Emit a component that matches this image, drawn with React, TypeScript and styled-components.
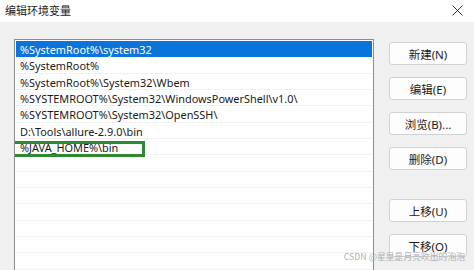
import styled, { createGlobalStyle } from 'styled-components';

const paths = [
  '%SystemRoot%\\system32',
  '%SystemRoot%',
  '%SystemRoot%\\System32\\Wbem',
  '%SYSTEMROOT%\\System32\\WindowsPowerShell\\v1.0\\',
  '%SYSTEMROOT%\\System32\\OpenSSH\\',
  'D:\\Tools\\allure-2.9.0\\bin',
  '%JAVA_HOME%\\bin',
  '',
  '',
  '',
  '',
  '',
  '',
  '',
];

const GlobalStyle = createGlobalStyle`
  html, body {
    margin: 0;
    padding: 0;
    width: 474px;
    height: 270px;
    overflow: hidden;
    background: #f0f0f0;
  }
  * {
    box-sizing: border-box;
  }
`;

export default function App() {
  return (
    <>
      <GlobalStyle />
      <StWindow>
        <StTitleBar>
          <StTitle>编辑环境变量</StTitle>
          <StClose aria-label="close">
            <svg width="11" height="11" viewBox="0 0 11 11">
              <path d="M0.5 0.5 L10.5 10.5 M10.5 0.5 L0.5 10.5" stroke="#333" strokeWidth="1" />
            </svg>
          </StClose>
        </StTitleBar>
        <StBody>
          <StList>
            {paths.map((p, i) => (
              <StRow key={i} selected={i === 0}>
                {p}
              </StRow>
            ))}
            <StMark />
          </StList>
          <StButtons>
            <StButton>新建(N)</StButton>
            <StButton>编辑(E)</StButton>
            <StButton>浏览(B)...</StButton>
            <StButton>删除(D)</StButton>
            <StButton $gap>上移(U)</StButton>
            <StButton>下移(O)</StButton>
          </StButtons>
          <StWatermark>CSDN @星星是月亮吹出的泡泡</StWatermark>
        </StBody>
      </StWindow>
    </>
  );
}

const StWindow = styled.div`
  display: flex;
  flex-direction: column;
  width: 474px;
  height: 270px;
  overflow: hidden;
  font-family: 'Noto Sans', 'Noto Sans CJK SC', sans-serif;
`;

const StTitleBar = styled.header`
  display: flex;
  align-items: center;
  justify-content: space-between;
  flex: 0 0 22px;
  padding: 0 5px 0 5px;
  background: #ffffff;
`;

const StTitle = styled.span`
  font-family: 'Noto Sans CJK SC', sans-serif;
  font-size: 11px;
  color: #222;
  margin-top: -2px;
`;

const StClose = styled.button`
  display: flex;
  align-items: center;
  justify-content: center;
  width: 24px;
  height: 22px;
  padding: 0;
  border: none;
  background: transparent;
  margin-top: -1px;
`;

const StBody = styled.main`
  position: relative;
  flex: 1;
  min-height: 0;
  overflow: hidden;
  display: flex;
  align-items: flex-start;
  padding: 17px 0 0 14px;
  background: #f0f0f0;
`;

const StList = styled.ul`
  position: relative;
  flex: 0 0 360px;
  height: 240px;
  margin: 0;
  padding: 1px 1px;
  list-style: none;
  background: #ffffff;
  border: 1px solid #8c8c8c;
  overflow: hidden;
`;

const StRow = styled.li<{ selected?: boolean }>`
  height: 16.35px;
  padding-left: 4px;
  font-size: 10.9px;
  line-height: 17px;
  white-space: nowrap;
  color: ${({ selected }) => (selected ? '#ffffff' : '#1a1a1a')};
  background: ${({ selected }) => (selected ? '#0a74da' : '#ffffff')};
  border-bottom: 1px solid ${({ selected }) => (selected ? '#0a74da' : '#f1f1f1')};
`;

const StMark = styled.div`
  position: absolute;
  left: -5px;
  top: 101px;
  width: 135px;
  height: 16px;
  border: 3px solid #2d8a30;
`;

const StButtons = styled.div`
  display: flex;
  flex-direction: column;
  gap: 12px;
  margin: 3px 0 0 15px;
`;

const StButton = styled.button<{ $gap?: boolean }>`
  width: 78px;
  height: 23px;
  margin-top: ${({ $gap }) => ($gap ? '17px' : '0')};
  padding: 0;
  font-family: 'Noto Sans', 'Noto Sans CJK SC', sans-serif;
  font-size: 11.5px;
  color: #1b1b1b;
  background: #fdfdfd;
  border: 1px solid #d2d2d2;
  border-radius: 3px;
`;

const StWatermark = styled.span`
  position: absolute;
  right: 9px;
  bottom: 8px;
  line-height: 11px;
  font-family: 'Noto Sans CJK SC', sans-serif;
  font-size: 8.8px;
  color: #b0b0b0;
`;
